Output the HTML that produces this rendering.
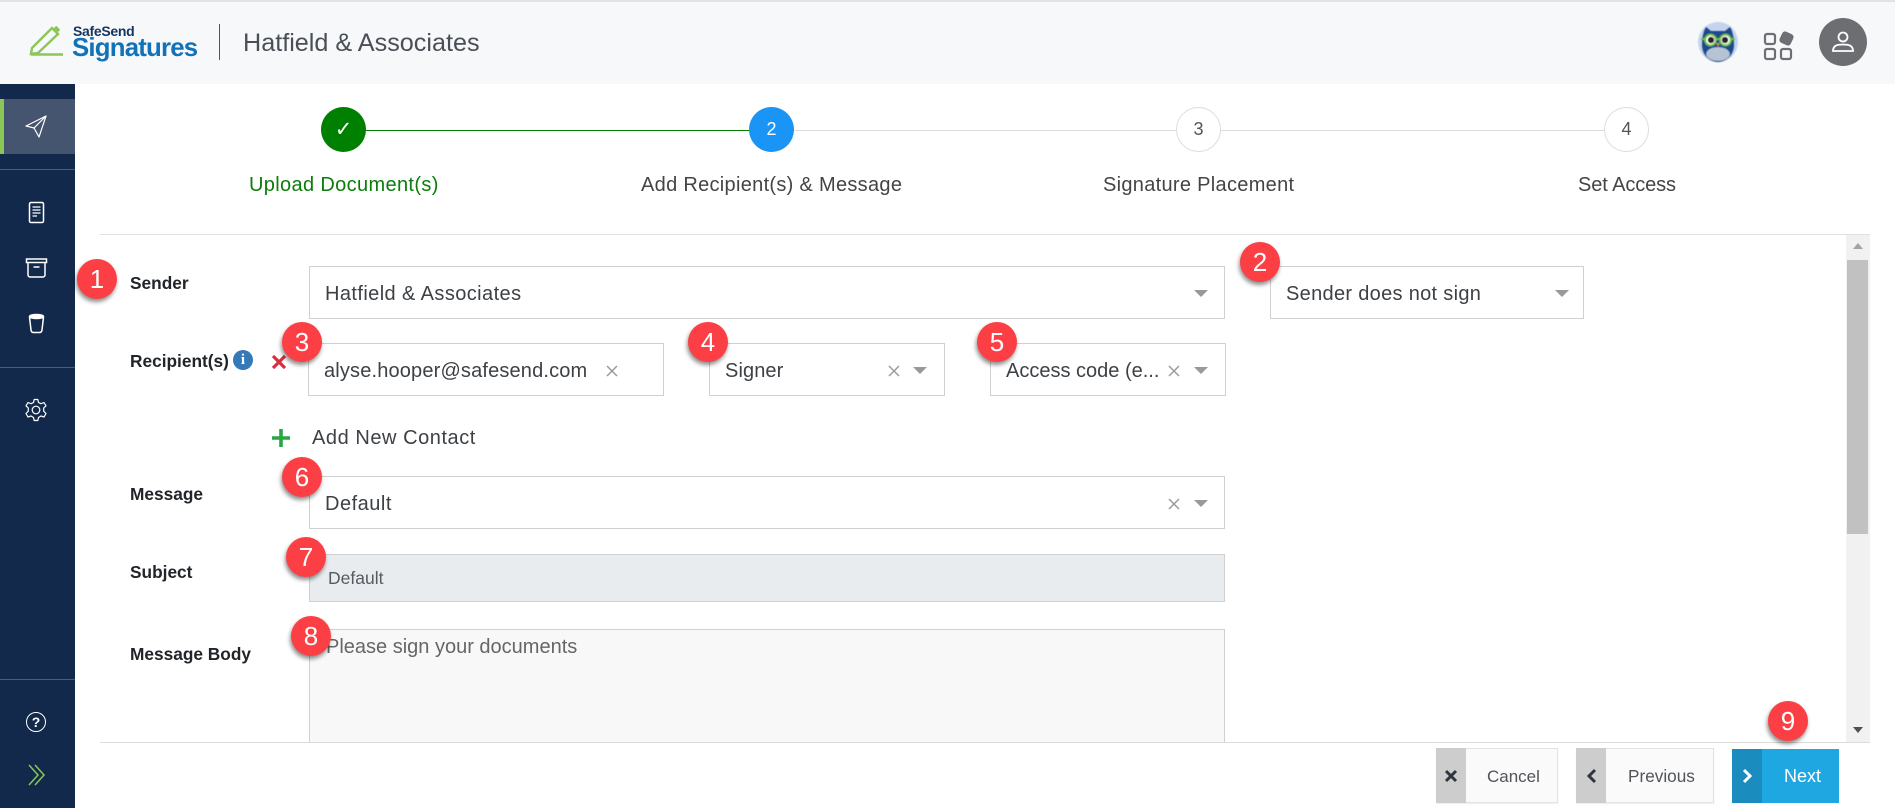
<!DOCTYPE html>
<html><head><meta charset="utf-8">
<style>
html,body{margin:0;padding:0;width:1895px;height:808px;overflow:hidden;background:#fff;font-family:"Liberation Sans",sans-serif;color:#3d4145}
.a{position:absolute}
.t{position:absolute;white-space:nowrap;line-height:1;transform-origin:0 50%}
.f{font-size:20px}
.st{font-size:20px;letter-spacing:.35px;color:#444}
.box{position:absolute;box-sizing:border-box;border:1px solid #d0d0d0;background:#fff}
.lb{position:absolute;white-space:nowrap;font-weight:bold;font-size:17.3px;line-height:1;color:#212529}
.bd{position:absolute;width:40px;height:40px;border-radius:50%;background:#fb3f45;color:#fff;font-size:26px;line-height:40px;text-align:center;box-shadow:-1px 3px 4px rgba(0,0,0,.45);z-index:5}
.ar{position:absolute;width:0;height:0;border-left:7.5px solid transparent;border-right:7.5px solid transparent;border-top:7.5px solid #999}
.x{position:absolute;width:14px;height:14px}
.c{position:absolute;box-sizing:border-box;width:45px;height:45px;border-radius:50%;text-align:center;line-height:43px;font-size:18px;background:#fff;border:1px solid #dedede;color:#555}
.sep{position:absolute;height:1px;background:#4a5d7c;left:0;width:75px}
</style></head><body>
<!-- header -->
<div class="a" style="left:0;top:0;width:1895px;height:84px;background:#f7f8fa;border-top:2px solid #dfe2e6;box-sizing:border-box"></div>
<svg class="a" style="left:28px;top:24px" width="38" height="34" viewBox="0 0 38 34" fill="none" stroke="#8cc65a" stroke-width="2.4"><path d="M3 30 L4 24 L24 4 L30 10 L10 29 Z"/><path d="M27 3 L31 7" stroke-width="3.5"/><path d="M3 30.500 H35"/></svg>
<div class="t" style="left:73px;top:24px;font-size:14px;font-weight:bold;color:#15345f;letter-spacing:-.3px">SafeSend</div>
<div class="t" style="left:72px;top:36px;font-size:25.800px;font-weight:bold;color:#1272b8;letter-spacing:-.8px">Signatures</div>
<div class="a" style="left:219px;top:24px;width:1px;height:36px;background:#555"></div>
<div class="t" style="left:243px;top:31px;font-size:25.200px;color:#4a4f57">Hatfield &amp; Associates</div>
<svg class="a" style="left:1698px;top:22px;filter:blur(.5px)" width="40" height="40" viewBox="0 0 40 40"><circle cx="20" cy="20" r="20" fill="#c5d3ee"/><path d="M4 24 C4 14 6 8 8 5 L13 9 H27 L32 5 C34 8 36 14 36 24 C35 35 27 40 20 40 C13 40 5 35 4 24Z" fill="#1d4a8c"/><ellipse cx="20" cy="32" rx="12" ry="7" fill="#b6c3d3"/><rect x="3" y="16" width="34" height="2" fill="#6fc04a"/><circle cx="12.500" cy="18" r="6.500" fill="#79c14e"/><circle cx="27.500" cy="18" r="6.500" fill="#79c14e"/><circle cx="12.500" cy="18" r="4.500" fill="#fff"/><circle cx="27.500" cy="18" r="4.500" fill="#fff"/><circle cx="13" cy="18" r="3" fill="#222"/><circle cx="27" cy="18" r="3" fill="#222"/><path d="M18 21 L22 21 L20 25Z" fill="#e8923a"/></svg>
<svg class="a" style="left:1763px;top:31px" width="32" height="30" viewBox="0 0 32 30" fill="none" stroke="#6c6f73" stroke-width="2.2"><rect x="2" y="3" width="10" height="10" rx="2"/><rect x="2" y="18" width="10" height="10" rx="2"/><rect x="18" y="18" width="10" height="10" rx="2"/><rect x="18.500" y="2.500" width="10" height="10" rx="2" fill="#6c6f73" transform="rotate(25 23.500 7.500)"/></svg>
<div class="a" style="left:1819px;top:18px;width:48px;height:48px;border-radius:50%;background:#6c6e72"></div>
<svg class="a" style="left:1830px;top:29px" width="26" height="26" viewBox="0 0 26 26" fill="none" stroke="#fff" stroke-width="1.800"><circle cx="13" cy="8" r="4.500"/><path d="M3 22 C3 16 8 15.500 13 15.500 C18 15.500 23 16 23 22 Z"/></svg>
<!-- sidebar -->
<div class="a" style="left:0;top:84px;width:75px;height:724px;background:#13294b"></div>
<div class="a" style="left:0;top:99px;width:75px;height:55px;background:#45556f"></div>
<div class="a" style="left:0;top:99px;width:4px;height:55px;background:#8bc656"></div>
<svg class="a" style="left:24px;top:114px" width="24" height="24" viewBox="0 0 24 24" fill="none" stroke="#fff" stroke-width="1.200" stroke-linejoin="round"><path d="M22 2 L2 12 L10 14 L15 23 Z"/><path d="M22 2 L10 14"/></svg>
<div class="sep" style="top:169px"></div>
<svg class="a" style="left:26px;top:200px" width="20" height="26" viewBox="0 0 20 26" fill="none" stroke="#fff" stroke-width="1.500"><rect x="3.500" y="2.500" width="14" height="20" rx="1.500"/><path d="M6.500 7 H14.500 M6.500 10 H14.500 M6.500 13 H14.500 M6.500 16 H11" stroke="#d5dae2"/></svg>
<svg class="a" style="left:25px;top:257px" width="24" height="22" viewBox="0 0 24 22" fill="none" stroke="#fff" stroke-width="1.500"><rect x="1.500" y="2" width="20" height="3.500"/><path d="M3 5.500 V18 C3 19 4 20 5 20 H18 C19 20 20 19 20 18 V5.500"/><path d="M8.500 10 H14.500"/></svg>
<svg class="a" style="left:27px;top:313px" width="20" height="22" viewBox="0 0 20 22" fill="none" stroke="#fff" stroke-width="1.500"><ellipse cx="9.500" cy="3.500" rx="7" ry="2" fill="#fff"/><path d="M2.500 4 L4 17 C4.200 18.500 5 19.500 6.500 19.500 H12.500 C14 19.500 14.800 18.500 15 17 L16.500 4"/></svg>
<div class="sep" style="top:367px"></div>
<svg class="a" style="left:24px;top:398px" width="24" height="24" viewBox="0 0 24 24" fill="none" stroke="#fff" stroke-width="1.200" stroke-linejoin="round"><circle cx="12" cy="12" r="3.800"/><path d="M10.200 1.500 H13.800 L14.500 4.500 L17 5.700 L20 4.500 L22 7.800 L19.700 10 V13.200 L22 15.500 L20 19 L17 18 L14.500 19.500 L13.800 22.500 H10.200 L9.500 19.500 L7 18 L4 19 L2 15.500 L4.300 13.200 V10 L2 7.800 L4 4.500 L7 5.700 L9.500 4.500 Z"/></svg>
<div class="sep" style="top:679px"></div>
<div class="a" style="left:26px;top:712px;width:18px;height:18px;border:1.500px solid #fff;border-radius:50%;color:#fff;font-weight:bold;font-size:14px;line-height:18px;text-align:center">?</div>
<svg class="a" style="left:27px;top:762px" width="20" height="26" viewBox="0 0 20 26" fill="none" stroke="#8bc656" stroke-width="1.500"><path d="M2 3 L11 13 L2 23"/><path d="M8 3 L17 13 L8 23"/></svg>
<!-- stepper -->
<div class="a" style="left:365px;top:130px;width:384px;height:1px;background:#008000"></div>
<div class="a" style="left:793px;top:130px;width:811px;height:1px;background:#dcdcdc"></div>
<div class="c" style="left:321px;top:107px;background:#008000;border:0;color:#fff;line-height:45px;font-size:21px">✓</div>
<div class="c" style="left:749px;top:107px;background:#1a95f5;border:0;color:#fff;line-height:45px">2</div>
<div class="c" style="left:1176px;top:107px">3</div>
<div class="c" style="left:1604px;top:107px">4</div>
<div class="t st" style="left:249px;top:175px;color:#0a7d0a">Upload Document(s)</div>
<div class="t st" style="left:641px;top:175px;letter-spacing:.3px">Add Recipient(s) &amp; Message</div>
<div class="t st" style="left:1103px;top:175px;letter-spacing:.3px">Signature Placement</div>
<div class="t st" style="left:1578px;top:175px;letter-spacing:-.1px">Set Access</div>
<div class="a" style="left:100px;top:234px;width:1770px;height:1px;background:#e0e0e0"></div>
<!-- scrollbar -->
<div class="a" style="left:1846px;top:235px;width:24px;height:507px;background:#f1f1f1"></div>
<div class="a" style="left:1847px;top:260px;width:21px;height:274px;background:#c1c1c1"></div>
<div class="a" style="left:1853px;top:243px;width:0;height:0;border-left:5px solid transparent;border-right:5px solid transparent;border-bottom:6px solid #a3a3a3"></div>
<div class="a" style="left:1853px;top:727px;width:0;height:0;border-left:5px solid transparent;border-right:5px solid transparent;border-top:6px solid #505050"></div>
<!-- form -->
<div class="lb" style="left:130px;top:275px">Sender</div>
<div class="lb" style="left:130px;top:353px">Recipient(s)</div>
<div class="a" style="left:233px;top:350px;width:20px;height:20px;border-radius:50%;background:#337ab7;color:#fff;font:bold 15px/20px 'Liberation Serif',serif;text-align:center">i</div>
<svg class="a" style="left:271px;top:354px" width="16" height="16" viewBox="0 0 16 16" stroke="#d6303f" stroke-width="3.200"><path d="M2 2 L14 14 M14 2 L2 14"/></svg>
<div class="box" style="left:309px;top:266px;width:916px;height:53px"></div>
<div class="t f" style="left:325px;top:284px;letter-spacing:.41px">Hatfield &amp; Associates</div>
<div class="ar" style="left:1194px;top:290px"></div>
<div class="box" style="left:1270px;top:266px;width:314px;height:53px"></div>
<div class="t f" style="left:1286px;top:284px;letter-spacing:.31px">Sender does not sign</div>
<div class="ar" style="left:1555px;top:290px"></div>
<div class="box" style="left:308px;top:343px;width:356px;height:53px"></div>
<div class="t f" style="left:324px;top:361px;letter-spacing:.16px">alyse.hooper@safesend.com</div>
<svg class="x" style="left:605px;top:364px" viewBox="0 0 14 14" stroke="#9a9a9a" stroke-width="1.500"><path d="M2 2 L12 12 M12 2 L2 12"/></svg>
<div class="box" style="left:709px;top:343px;width:236px;height:53px"></div>
<div class="t f" style="left:725px;top:361px;letter-spacing:.1px">Signer</div>
<svg class="x" style="left:887px;top:364px" viewBox="0 0 14 14" stroke="#9a9a9a" stroke-width="1.500"><path d="M2 2 L12 12 M12 2 L2 12"/></svg>
<div class="ar" style="left:913px;top:367px"></div>
<div class="box" style="left:990px;top:343px;width:236px;height:53px"></div>
<div class="t f" style="left:1006px;top:361px">Access code (e...</div>
<svg class="x" style="left:1167px;top:364px" viewBox="0 0 14 14" stroke="#9a9a9a" stroke-width="1.500"><path d="M2 2 L12 12 M12 2 L2 12"/></svg>
<div class="ar" style="left:1194px;top:367px"></div>
<svg class="a" style="left:271px;top:428px" width="20" height="20" viewBox="0 0 20 20" stroke="#28a745" stroke-width="3.600"><path d="M10 1 V19 M1 10 H19"/></svg>
<div class="t f" style="left:312px;top:428px;letter-spacing:.55px">Add New Contact</div>
<div class="lb" style="left:130px;top:486px">Message</div>
<div class="box" style="left:309px;top:476px;width:916px;height:53px"></div>
<div class="t f" style="left:325px;top:494px;letter-spacing:.5px">Default</div>
<svg class="x" style="left:1167px;top:497px" viewBox="0 0 14 14" stroke="#9a9a9a" stroke-width="1.500"><path d="M2 2 L12 12 M12 2 L2 12"/></svg>
<div class="ar" style="left:1194px;top:500px"></div>
<div class="lb" style="left:130px;top:564px">Subject</div>
<div class="box" style="left:309px;top:554px;width:916px;height:48px;background:#e9ecef"></div>
<div class="t" style="left:328px;top:570px;font-size:17.500px;color:#555b61">Default</div>
<div class="lb" style="left:130px;top:646px">Message Body</div>
<div class="box" style="left:309px;top:629px;width:916px;height:113px;background:#f8f8f8;border-bottom:0"></div>
<div class="t f" style="left:326px;top:637px;color:#666">Please sign your documents</div>
<!-- footer -->
<div class="a" style="left:100px;top:742px;width:1770px;height:1px;background:#dcdcdc"></div>
<div class="a" style="left:1436px;top:748px;width:122px;height:55px;background:#fafafa;box-sizing:border-box;border:1px solid #e2e2e2;box-shadow:0 1px 1px rgba(0,0,0,.08)"></div>
<div class="a" style="left:1436px;top:748px;width:30px;height:55px;background:#cdcdcd"></div>
<svg class="a" style="left:1444px;top:769px" width="14" height="14" viewBox="0 0 14 14" stroke="#30343c" stroke-width="3"><path d="M2 2 L12 12 M12 2 L2 12"/></svg>
<div class="t" style="left:1487px;top:768px;font-size:17px;color:#50545a">Cancel</div>
<div class="a" style="left:1576px;top:748px;width:138px;height:55px;background:#fafafa;box-sizing:border-box;border:1px solid #e2e2e2;box-shadow:0 1px 1px rgba(0,0,0,.08)"></div>
<div class="a" style="left:1576px;top:748px;width:30px;height:55px;background:#cdcdcd"></div>
<svg class="a" style="left:1586px;top:768px" width="12" height="16" viewBox="0 0 12 16" fill="none" stroke="#30343c" stroke-width="3"><path d="M9 2 L3 8 L9 14"/></svg>
<div class="t" style="left:1628px;top:768px;font-size:17.200px;color:#50545a">Previous</div>
<div class="a" style="left:1732px;top:749px;width:107px;height:54px;background:#1fa7e1"></div>
<div class="a" style="left:1732px;top:749px;width:30px;height:54px;background:#1a8cbe"></div>
<svg class="a" style="left:1741px;top:768px" width="12" height="16" viewBox="0 0 12 16" fill="none" stroke="#fff" stroke-width="3"><path d="M3 2 L9 8 L3 14"/></svg>
<div class="t" style="left:1784px;top:767px;font-size:18px;color:#fff">Next</div>
<!-- badges -->
<div class="bd" style="left:77px;top:259px">1</div>
<div class="bd" style="left:1240px;top:242px">2</div>
<div class="bd" style="left:282px;top:322px">3</div>
<div class="bd" style="left:688px;top:322px">4</div>
<div class="bd" style="left:977px;top:322px">5</div>
<div class="bd" style="left:282px;top:457px">6</div>
<div class="bd" style="left:286px;top:537px">7</div>
<div class="bd" style="left:291px;top:616px">8</div>
<div class="bd" style="left:1768px;top:701px">9</div>
</body></html>
